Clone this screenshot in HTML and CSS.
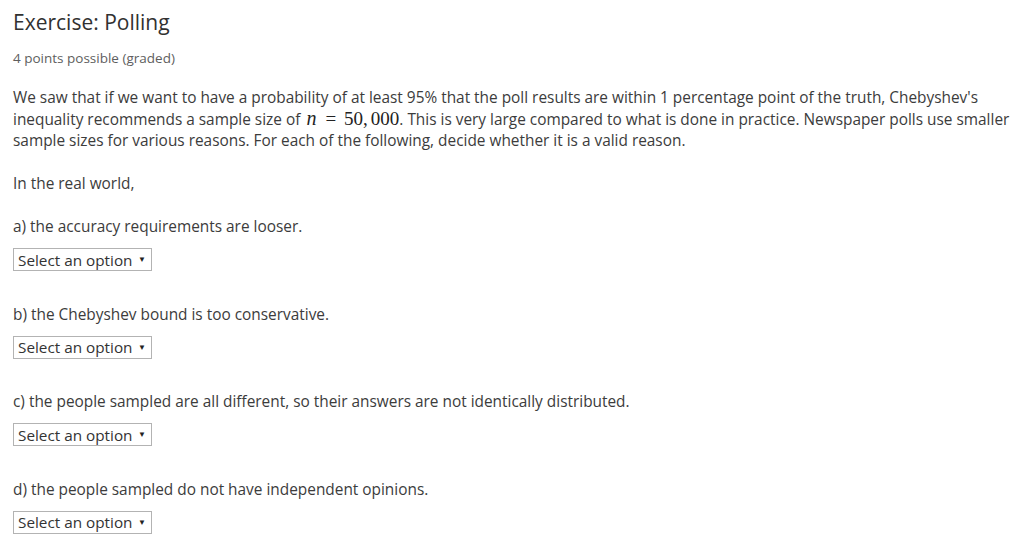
FILE: index.html
```html
<!DOCTYPE html>
<html lang="en">
<head>
  <meta charset="UTF-8">
  <title>Exercise: Polling</title>
  <link rel="stylesheet" href="styles.css">
</head>
<body>
  <div class="problem">
    <h3 class="problem-title">Exercise: Polling</h3>
    <div class="problem-progress">4 points possible (graded)</div>

    <p class="intro">We saw that if we want to have a probability of at least 95% that the poll results are within 1 percentage point of the truth, Chebyshev's inequality recommends a sample size of <span class="math"><i>n</i><span class="rel">=</span>50,<span class="thin"></span>000</span>. This is very large compared to what is done in practice. Newspaper polls use smaller sample sizes for various reasons. For each of the following, decide whether it is a valid reason.</p>

    <p>In the real world,</p>

    <div class="question">
      <p>a) the accuracy requirements are looser.</p>
      <div class="select-box">
        <select><option>Select an option</option><option>Valid</option><option>Not valid</option></select>
      </div>
    </div>

    <div class="question">
      <p>b) the Chebyshev bound is too conservative.</p>
      <div class="select-box">
        <select><option>Select an option</option><option>Valid</option><option>Not valid</option></select>
      </div>
    </div>

    <div class="question">
      <p>c) the people sampled are all different, so their answers are not identically distributed.</p>
      <div class="select-box">
        <select><option>Select an option</option><option>Valid</option><option>Not valid</option></select>
      </div>
    </div>

    <div class="question">
      <p>d) the people sampled do not have independent opinions.</p>
      <div class="select-box">
        <select><option>Select an option</option><option>Valid</option><option>Not valid</option></select>
      </div>
    </div>
  </div>
</body>
</html>
```

FILE: styles.css
```css
body {
    margin: 0;
    padding: 0;
    background: #fff;
    font-family: "Open Sans", Arial, sans-serif;
    color: #3c3c3c;
}

.problem {
    padding: 8px 13px;
}

.problem-title {
    margin: 0;
    font-size: 21px;
    font-weight: 400;
    line-height: 28px;
    color: #313131;
}

.problem-progress {
    margin-top: 13px;
    font-size: 13.5px;
    line-height: 18px;
    color: #5e5e5e;
}

p {
    margin: 0;
    font-size: 15.4px;
    line-height: 21px;
}

.intro {
    margin-top: 20px;
    margin-bottom: 22px;
}

/* TeX-like inline formula */
.math {
    font-family: "Liberation Serif", "Times New Roman", serif;
    font-size: 19px;
    line-height: 1;
    color: #222;
    padding-left: 2px;
}

.math i {
    font-size: 20px;
}

.math .rel {
    margin: 0 8px 0 9px;
}

.math .thin {
    display: inline-block;
    width: 3px;
}

.question {
    margin-top: 22px;
}

.question + .question {
    margin-top: 32.5px;
}

.question p {
    margin-bottom: 11px;
}

.select-box {
    position: relative;
    width: 139px;
}

.select-box select {
    display: block;
    -webkit-appearance: none;
    appearance: none;
    font-family: "Open Sans", Arial, sans-serif;
    font-size: 15.3px;
    color: #333;
    background: #fff;
    border: 1px solid #b3b3b3;
    border-radius: 0;
    height: 23px;
    padding: 0 16px 0 4px;
    width: 139px;
}

.select-box::after {
    content: "\25BC";
    position: absolute;
    right: 6px;
    top: 6px;
    font-size: 8px;
    line-height: 10px;
    color: #222;
    pointer-events: none;
}
```
